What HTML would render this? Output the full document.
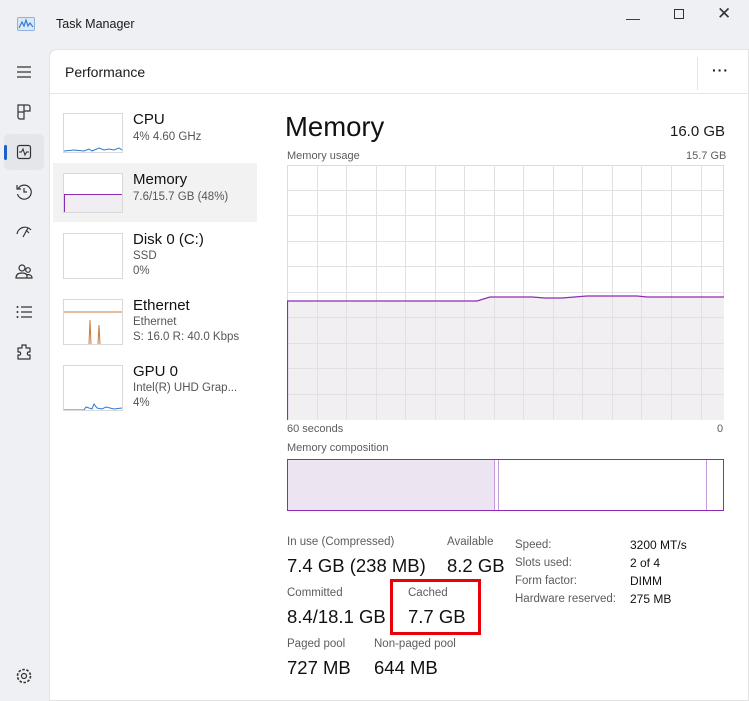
<!DOCTYPE html>
<html><head><meta charset="utf-8"><style>
*{margin:0;padding:0;box-sizing:border-box}
body{width:749px;height:701px;background:#eff0f4;font-family:"Liberation Sans",sans-serif;position:relative;overflow:hidden;color:#1a1a1a}
.a{position:absolute;white-space:nowrap}
.panel{position:absolute;left:49px;top:49px;width:700px;height:652px;background:#fff;border-top-left-radius:8px;border:1px solid #e3e3e6}
.lbl{font-size:11.5px;color:#5c5c5c}
.val{font-size:18.5px;color:#111}
.th{position:absolute;left:63px;width:60px;border:1px solid #d9d9d9;background:#fff}
.sn{font-size:15px;color:#111}
.ss{font-size:11.5px;color:#555;line-height:15px}
.ic{position:absolute;left:14px;width:20px;height:20px}
</style></head><body>
<svg class="a" style="left:17px;top:16px" width="18" height="16"><rect x="0.5" y="1.5" width="17" height="13" rx="1.5" fill="#dbe8f7" stroke="#8fb2dc"/><path d="M2 12 L5 6 L7 10 L9 4 L11 10 L13 7 L16 11" fill="none" stroke="#3a7bd5" stroke-width="1.2"/></svg>
<div class="a" style="left:56px;top:17px;font-size:12.5px">Task Manager</div>
<div class="a" style="left:626px;top:10px;font-size:14px;color:#333">—</div>
<div class="a" style="left:674px;top:9px;width:10px;height:10px;border:1px solid #333"></div>
<div class="a" style="left:717px;top:4px;font-size:17px;color:#333">✕</div>

<svg class="ic" style="top:62px" viewBox="0 0 20 20"><path d="M3 5h14M3 10h14M3 15h14" stroke="#333" stroke-width="1.2"/></svg>
<svg class="ic" style="top:102px" viewBox="0 0 20 20"><path d="M4 3h6v14H6a2 2 0 0 1-2-2zM10 3h4a2 2 0 0 1 2 2v4h-6M4 10h6" fill="none" stroke="#333" stroke-width="1.2"/></svg>
<div class="a" style="left:4px;top:134px;width:40px;height:36px;background:#e5e6ec;border-radius:5px"></div>
<div class="a" style="left:4px;top:145px;width:3px;height:15px;background:#1a62c6;border-radius:2px"></div>
<svg class="ic" style="top:142px" viewBox="0 0 20 20"><rect x="3.5" y="3.5" width="13" height="13" rx="2" fill="none" stroke="#333" stroke-width="1.2"/><path d="M5 10h2.5l1.5-3 2 6 1.5-3H15" fill="none" stroke="#333" stroke-width="1.1"/></svg>
<svg class="ic" style="top:182px" viewBox="0 0 20 20"><path d="M4 7a7 7 0 1 1-.5 5" fill="none" stroke="#333" stroke-width="1.2"/><path d="M3 3v4h4M10 6v4h3" fill="none" stroke="#333" stroke-width="1.2"/></svg>
<svg class="ic" style="top:222px" viewBox="0 0 20 20"><path d="M3 12a8 8 0 0 1 14-4M9 15l5-9M12 8l3 3" fill="none" stroke="#333" stroke-width="1.2"/></svg>
<svg class="ic" style="top:262px" viewBox="0 0 20 20"><circle cx="8" cy="6" r="3" fill="none" stroke="#333" stroke-width="1.2"/><circle cx="14" cy="8" r="2.3" fill="none" stroke="#333" stroke-width="1.2"/><path d="M2 16c0-4 3-5 6-5s5 1 5 3v2zM12 13c3-1 6 0 6 3H13" fill="none" stroke="#333" stroke-width="1.2"/></svg>
<svg class="ic" style="top:302px" viewBox="0 0 20 20"><path d="M7 5h11M7 10h11M7 15h11" stroke="#333" stroke-width="1.2"/><circle cx="3.5" cy="5" r="1" fill="#333"/><circle cx="3.5" cy="10" r="1" fill="#333"/><circle cx="3.5" cy="15" r="1" fill="#333"/></svg>
<svg class="ic" style="top:342px" viewBox="0 0 20 20"><path d="M8 3h4v3h4v4h-2a2 2 0 0 0 0 3h2v4H4v-4h2a2 2 0 0 0 0-3H4V6h4z" fill="none" stroke="#333" stroke-width="1.2" stroke-linejoin="round"/></svg>
<svg class="ic" style="top:666px" viewBox="0 0 20 20"><circle cx="10" cy="10" r="2.5" fill="none" stroke="#333" stroke-width="1.2"/><circle cx="10" cy="10" r="6.5" fill="none" stroke="#333" stroke-width="1.6" stroke-dasharray="2.5 1.6"/></svg>

<div class="panel"></div>
<div class="a" style="left:49px;top:93px;width:700px;height:1px;background:#e5e5e5"></div>
<div class="a" style="left:65px;top:64px;font-size:14px;color:#1a1a1a">Performance</div>
<div class="a" style="left:697px;top:57px;width:1px;height:33px;background:#e5e5e5"></div>
<div class="a" style="left:712px;top:62px;font-size:14px;font-weight:bold;letter-spacing:1px">···</div>

<div class="a" style="left:53px;top:163px;width:204px;height:59px;background:#f2f2f2"></div>
<div class="th" style="top:113px;height:40px"><svg width="58" height="38"><path d="M0 37 L10 36 L20 37 L25 35 L28 37 L35 34 L40 36 L45 35 L50 36 L55 34 L58 36" fill="none" stroke="#2f7ad0" stroke-width="1"/></svg></div>
<div class="th" style="top:173px;height:40px"><div style="position:absolute;left:0;top:20px;right:0;bottom:0;background:#f1eef3;border-top:1px solid #8e2bb5;border-left:1px solid #8e2bb5"></div></div>
<div class="th" style="top:233px;height:46px"></div>
<div class="th" style="top:299px;height:46px"><svg width="58" height="44"><path d="M0 12H58" stroke="#c97a3c"/><path d="M25 44 L26 20 L27 44 M34 44 L35 25 L36 44" fill="none" stroke="#c97a3c"/></svg></div>
<div class="th" style="top:365px;height:46px"><svg width="58" height="44"><path d="M0 44 L20 44 L22 41 L28 43 L30 38 L33 42 L38 43 L42 41 L50 43 L58 42" fill="none" stroke="#2f7ad0"/></svg></div>

<div class="a" style="left:133px;top:111px"><div class="sn">CPU</div><div class="ss" style="margin-top:2px">4% 4.60 GHz</div></div>
<div class="a" style="left:133px;top:171px"><div class="sn">Memory</div><div class="ss" style="margin-top:2px">7.6/15.7 GB (48%)</div></div>
<div class="a" style="left:133px;top:231px"><div class="sn">Disk 0 (C:)</div><div class="ss" style="margin-top:1px">SSD<br>0%</div></div>
<div class="a" style="left:133px;top:297px"><div class="sn">Ethernet</div><div class="ss" style="margin-top:1px">Ethernet<br>S: 16.0 R: 40.0 Kbps</div></div>
<div class="a" style="left:133px;top:363px"><div class="sn">GPU 0</div><div class="ss" style="margin-top:1px">Intel(R) UHD Grap...<br>4%</div></div>

<div class="a" style="left:285px;top:111px;font-size:27.5px;color:#111">Memory</div>
<div class="a" style="left:670px;top:123px;font-size:15px">16.0 GB</div>
<div class="a lbl" style="left:287px;top:150px;font-size:11px">Memory usage</div>
<div class="a lbl" style="left:686px;top:150px;font-size:11px">15.7 GB</div>
<svg class="a" style="left:287px;top:165px" width="437" height="255">
<rect x="0.5" y="0.5" width="436" height="254" fill="#fff" stroke="#dcdcdc"/>
<path d="M0 136 L190 136 L203 132 L245 132 L258 133 L275 133 L300 131 L350 131 L360 132 L437 132 L437 255 L0 255Z" fill="#f2eff3"/>
<g stroke="#e1e1e1" stroke-width="1">
<path d="M30.5 0V255M59.5 0V255M89.5 0V255M118.5 0V255M148.5 0V255M177.5 0V255M207.5 0V255M236.5 0V255M266.5 0V255M295.5 0V255M325.5 0V255M354.5 0V255M384.5 0V255M414.5 0V255"/>
<path d="M0 25.5H437M0 50.5H437M0 76.5H437M0 101.5H437M0 127.5H437M0 152.5H437M0 178.5H437M0 203.5H437M0 229.5H437"/>
</g>
<path d="M0.5 255 L0.5 136 L190 136 L203 132 L245 132 L258 133 L275 133 L300 131 L350 131 L360 132 L437 132" fill="none" stroke="#8e2bb5" stroke-width="1.2"/>
</svg>
<div class="a lbl" style="left:287px;top:423px;font-size:11px">60 seconds</div>
<div class="a lbl" style="left:717px;top:423px;font-size:11px">0</div>
<div class="a lbl" style="left:287px;top:442px;font-size:11px">Memory composition</div>
<svg class="a" style="left:287px;top:459px" width="437" height="52">
<rect x="0.5" y="0.5" width="436" height="51" fill="#fff"/>
<rect x="0.5" y="0.5" width="207" height="51" fill="#ede4f1"/>
<path d="M207.5 0V52M211.5 0V52M419.5 0V52" stroke="#c79ad9"/>
<rect x="0.5" y="0.5" width="436" height="51" fill="none" stroke="#8e2bb5"/>
</svg>

<div class="a lbl" style="left:287px;top:536px">In use (Compressed)</div>
<div class="a val" style="left:287px;top:555px">7.4 GB (238 MB)</div>
<div class="a lbl" style="left:447px;top:536px">Available</div>
<div class="a val" style="left:447px;top:555px">8.2 GB</div>
<div class="a lbl" style="left:287px;top:587px">Committed</div>
<div class="a val" style="left:287px;top:606px">8.4/18.1 GB</div>
<div class="a lbl" style="left:408px;top:587px">Cached</div>
<div class="a val" style="left:408px;top:606px">7.7 GB</div>
<div class="a" style="left:390px;top:579px;width:91px;height:56px;border:3px solid #e8000b"></div>
<div class="a lbl" style="left:287px;top:638px">Paged pool</div>
<div class="a val" style="left:287px;top:657px">727 MB</div>
<div class="a lbl" style="left:374px;top:638px">Non-paged pool</div>
<div class="a val" style="left:374px;top:657px">644 MB</div>

<div class="a lbl" style="left:515px;top:536px;line-height:18px">Speed:<br>Slots used:<br>Form factor:<br>Hardware reserved:</div>
<div class="a" style="left:630px;top:536px;line-height:18px;font-size:12px;color:#111">3200 MT/s<br>2 of 4<br>DIMM<br>275 MB</div>
</body></html>
